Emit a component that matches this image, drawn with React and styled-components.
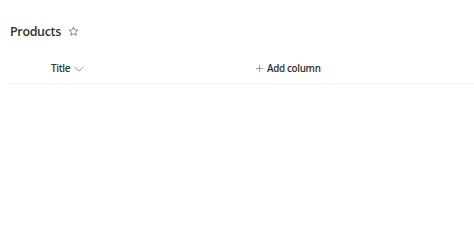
import React from "react";
import styled, { createGlobalStyle } from "styled-components";

const GlobalStyle = createGlobalStyle`
  body {
    margin: 0;
    background: #ffffff;
    font-family: "Open Sans", "Noto Sans", sans-serif;
    color: #323130;
  }
`;

const Page = styled.div`
  width: 474px;
  height: 244px;
  background: #ffffff;
  padding: 20px 0 0 10px;
  box-sizing: border-box;
`;

const Header = styled.div`
  display: flex;
  align-items: center;
  gap: 7px;
  height: 22px;
`;

const ListTitle = styled.h1`
  margin: 0;
  font-size: 12.5px;
  font-weight: 600;
  letter-spacing: -0.35px;
  color: #323130;
`;

const StarButton = styled.span`
  display: flex;
  align-items: center;
  color: #605e5c;
`;

const HeaderRow = styled.div`
  display: grid;
  grid-template-columns: 205px 1fr;
  align-items: center;
  height: 29px;
  margin-top: 12px;
  margin-left: -2px;
  padding-left: 43px;
  border-bottom: 1px solid #f3f2f1;
`;

const ColumnHeader = styled.div`
  display: flex;
  align-items: center;
  gap: 4px;
  font-size: 9.8px;
  font-weight: 600;
  letter-spacing: -0.3px;
  color: #323130;
`;

const Icon = styled.svg`
  flex: none;
`;

export default function App() {
  return (
    <>
      <GlobalStyle />
      <Page>
        <Header>
          <ListTitle>Products</ListTitle>
          <StarButton>
            <Icon width="11" height="11" viewBox="0 0 16 16" fill="none" stroke="#605e5c" strokeWidth="1.1" strokeLinejoin="round">
              <path d="M8 1.5l1.9 4.1 4.5.5-3.35 3 .95 4.4L8 11.3l-3.95 2.2.95-4.4-3.35-3 4.5-.5z" />
            </Icon>
          </StarButton>
        </Header>
        <HeaderRow>
          <ColumnHeader>
            Title
            <Icon width="10" height="6" viewBox="0 0 10 6" fill="none" stroke="#8a8886" strokeWidth="0.9">
              <path d="M0.5 0.8L5 5.2 9.5 0.8" />
            </Icon>
          </ColumnHeader>
          <ColumnHeader>
            <Icon width="7" height="7" viewBox="0 0 8 8" fill="none" stroke="#8a8886" strokeWidth="0.9">
              <path d="M4 0v8M0 4h8" />
            </Icon>
            Add column
          </ColumnHeader>
        </HeaderRow>
      </Page>
    </>
  );
}
